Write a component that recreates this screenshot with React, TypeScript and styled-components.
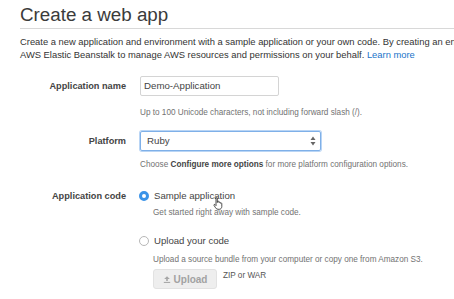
import React from 'react';
import styled, { createGlobalStyle } from 'styled-components';

const GlobalStyle = createGlobalStyle`
  body {
    margin: 0;
    background: #fff;
    font-family: "Liberation Sans", Arial, sans-serif;
    color: #333;
    overflow: hidden;
  }
`

const Page = styled.div`
  position: relative;
  width: 454px;
  height: 299px;
  padding-left: 20px;
  box-sizing: border-box;
  overflow: hidden;
`

const Title = styled.h1`
  margin: 0;
  padding-top: 3px;
  font-size: 18.8px;
  line-height: 23px;
  font-weight: normal;
  color: #3b3b3b;
  border-bottom: 1px solid #d8d8d8;
  padding-bottom: 2px;
  white-space: nowrap;
`

const Intro = styled.p`
  margin: 6px 0 0;
  font-size: 9.4px;
  line-height: 13px;
  color: #333;
  white-space: nowrap;
`

const Link = styled.a`
  color: #1a73c9;
  text-decoration: none;
`

const Form = styled.div`
  display: grid;
  grid-template-columns: 106px 1fr;
  column-gap: 14px;
  margin-top: 15px;
`

const Label = styled.div<{ top: number }>`
  text-align: right;
  font-weight: bold;
  font-size: 9.2px;
  color: #444;
  padding-top: ${p => p.top}px;
  white-space: nowrap;
`

const Field = styled.div<{ gap: number }>`
  padding-bottom: ${p => p.gap}px;
`

const TextInput = styled.div`
  width: 139px;
  height: 20px;
  box-sizing: border-box;
  border: 1px solid #d4d4d4;
  border-radius: 2px;
  padding: 0 3px;
  font-size: 9.7px;
  line-height: 18px;
  color: #444;
`

const Select = styled.div`
  width: 181px;
  height: 20px;
  box-sizing: border-box;
  border: 1px solid #7fb0e8;
  box-shadow: 0 0 0 1px #b9d5f5;
  border-radius: 2px;
  padding: 0 4px 0 6px;
  font-size: 9.7px;
  line-height: 18px;
  color: #444;
  display: flex;
  align-items: center;
  justify-content: space-between;
`

const Help = styled.div<{ top?: number }>`
  margin-top: ${p => p.top ?? 8}px;
  font-size: 8.2px;
  line-height: 11px;
  color: #727272;
  white-space: nowrap;
  b {
    color: #444;
  }
`

const Option = styled.div<{ top?: number }>`
  display: flex;
  align-items: center;
  gap: 5px;
  margin-top: ${p => p.top ?? 0}px;
  font-size: 9.6px;
  line-height: 14px;
  color: #444;
`

const Radio = styled.span<{ checked?: boolean }>`
  width: 10px;
  height: 10px;
  border-radius: 50%;
  box-sizing: border-box;
  border: ${p => (p.checked ? '3px solid #3a93e8' : '1px solid #b7b7b7')};
  background: #fff;
  flex-shrink: 0;
  margin-left: -1px;
`

const OptionHelp = styled(Help)`
  margin-left: 13px;
`

const UploadRow = styled.div`
  display: flex;
  align-items: center;
  gap: 6px;
  margin: 4px 0 0 13px;
`

const UploadButton = styled.div`
  width: 64px;
  height: 20px;
  border-radius: 3px;
  background: #eeeeee;
  border: 1px solid #e2e2e2;
  box-sizing: border-box;
  color: #a2a2a2;
  font-weight: bold;
  font-size: 10px;
  display: flex;
  align-items: center;
  justify-content: center;
  gap: 3px;
`

const Note = styled.span`
  font-size: 8.2px;
  color: #555;
  margin-top: -7px;
`

const Cursor = styled.svg`
  position: absolute;
  left: 213px;
  top: 197px;
`

const Arrows = () => (
  <svg width="6" height="10" viewBox="0 0 6 10">
    <path d="M3 0.5 L5.5 4 L0.5 4 Z" fill="#666" />
    <path d="M3 9.5 L5.5 6 L0.5 6 Z" fill="#666" />
  </svg>
)

const UploadIcon = () => (
  <svg width="8" height="9" viewBox="0 0 10 10">
    <path d="M5 1 L8.5 4.5 L6 4.5 L6 7 L4 7 L4 4.5 L1.5 4.5 Z" fill="#a6a6a6" />
    <rect x="1" y="8" width="8" height="1.3" fill="#a6a6a6" />
  </svg>
)

const App: React.FC = () => {
  return (
    <>
      <GlobalStyle />
      <Page>
        <Title>Create a web app</Title>
        <Intro>
          Create a new application and environment with a sample application or your own code. By creating an environment, you allow
          <br />
          AWS Elastic Beanstalk to manage AWS resources and permissions on your behalf. <Link>Learn more</Link>
        </Intro>
        <Form>
          <Label top={5}>Application name</Label>
          <Field gap={13}>
            <TextInput>Demo-Application</TextInput>
            <Help top={11}>Up to 100 Unicode characters, not including forward slash (/).</Help>
          </Field>

          <Label top={5}>Platform</Label>
          <Field gap={19}>
            <Select>
              Ruby
              <Arrows />
            </Select>
            <Help top={8}>
              Choose <b>Configure more options</b> for more platform configuration options.
            </Help>
          </Field>

          <Label top={2}>Application code</Label>
          <Field gap={0}>
            <Option>
              <Radio checked />
              Sample application
            </Option>
            <OptionHelp top={4}>Get started right away with sample code.</OptionHelp>
            <Option top={16}>
              <Radio />
              Upload your code
            </Option>
            <OptionHelp top={6}>Upload a source bundle from your computer or copy one from Amazon S3.</OptionHelp>
            <UploadRow>
              <UploadButton>
                <UploadIcon />
                Upload
              </UploadButton>
              <Note>ZIP or WAR</Note>
            </UploadRow>
          </Field>
        </Form>
        <Cursor width="11" height="13" viewBox="0 0 11 13">
          <path
            d="M3 1.2 C3 0.5 4.3 0.5 4.3 1.2 L4.3 5.5 L4.6 4.6 C4.8 4 6 4 6 4.8 L6 5.6 C6.2 5 7.4 5 7.4 5.8 L7.4 6.3 C7.6 5.8 8.8 5.8 8.8 6.6 L8.8 9.5 C8.8 11 7.8 12.3 6.3 12.3 L5 12.3 C3.8 12.3 3.2 11.6 2.6 10.8 L1 8.4 C0.6 7.8 1.4 7.1 2 7.6 L3 8.6 Z"
            fill="#fff"
            stroke="#222"
            strokeWidth="0.8"
          />
        </Cursor>
      </Page>
    </>
  );
}

export default App;
